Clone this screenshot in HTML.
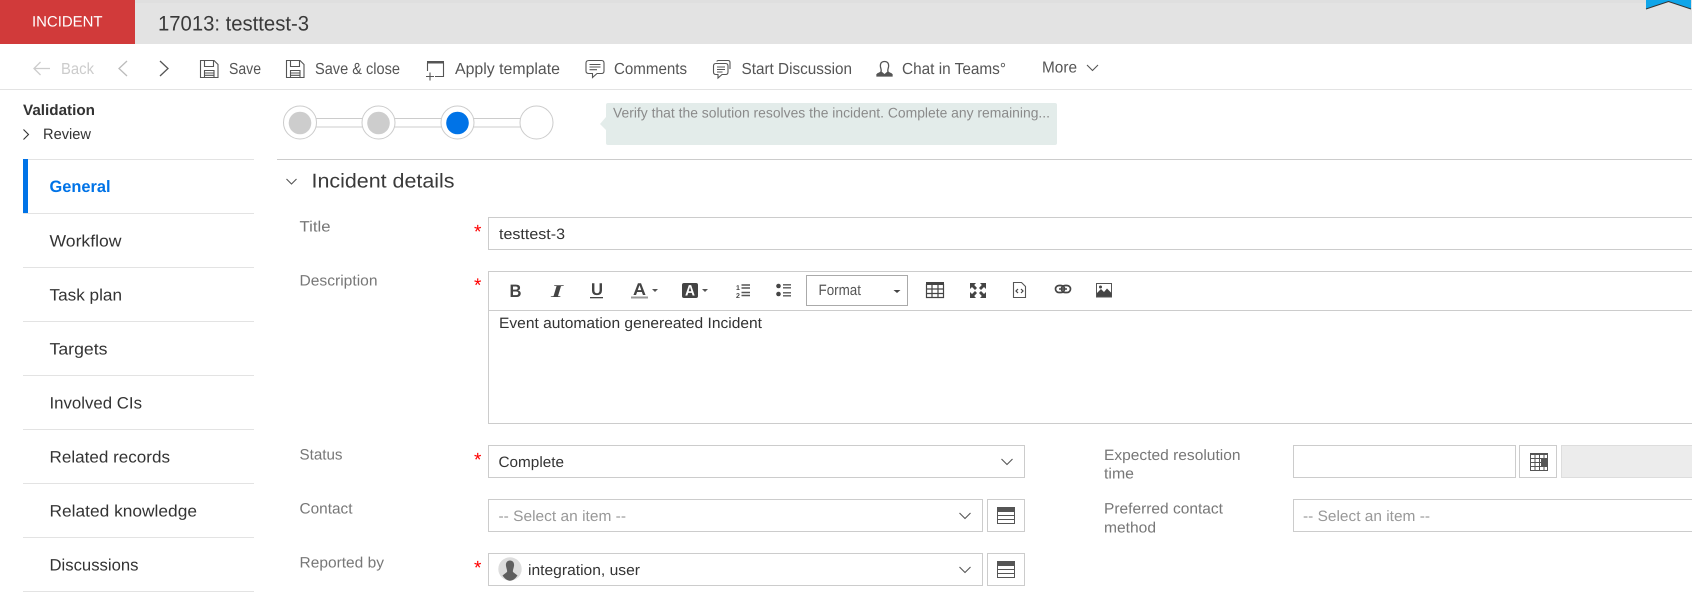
<!DOCTYPE html>
<html><head><meta charset="utf-8"><title>Incident 17013</title>
<style>
html,body{margin:0;padding:0;background:#fff;width:1692px;height:611px;overflow:hidden}
svg{display:block;font-family:"Liberation Sans",sans-serif}
.t{font-size:16px;fill:#555}
.s{font-size:16.5px;fill:#333}
.l{font-size:15px;fill:#777}
.v{font-size:15px;fill:#333}
.p{font-size:15px;fill:#999}
.a{font-size:19px;fill:#f00}
.b{fill:#fff;stroke:#ccc;stroke-width:1}
.ln{stroke:#e3e3e3;stroke-width:1}
.i{fill:none;stroke:#555;stroke-width:1.1}
.f{fill:#555}
</style></head><body>
<svg width="1692" height="611" viewBox="0 0 1692 611" xmlns="http://www.w3.org/2000/svg" text-rendering="geometricPrecision">
<rect width="1692" height="611" fill="#fff"/>
<!-- header -->
<rect width="1692" height="44" fill="#e3e3e3"/>
<rect width="1692" height="3" fill="#dfdfdf"/>
<rect width="135" height="44" fill="#d13a3a"/>
<text x="32" y="26.5" font-size="15" fill="#fff" textLength="70.5" lengthAdjust="spacingAndGlyphs">INCIDENT</text>
<text x="158" y="30.5" font-size="21" fill="#3a3a3a" textLength="151" lengthAdjust="spacingAndGlyphs">17013: testtest-3</text>
<path d="M1646 0H1691V9L1668.500 1.500L1646 9Z" fill="#0fa5e9"/>
<path d="M1646 9L1668.500 1.500L1691 9" fill="none" stroke="#333" stroke-width="1"/>
<!-- toolbar -->
<line x1="0" y1="89.500" x2="1692" y2="89.500" stroke="#e3e3e3"/>
<path d="M50 68.500H34M40.500 62L34 68.500L40.500 75" fill="none" stroke="#ccc" stroke-width="1.300"/>
<text x="61" y="74" class="t" style="fill:#ccc" textLength="33" lengthAdjust="spacingAndGlyphs">Back</text>
<path d="M127 61L119 68.500L127 76" fill="none" stroke="#bbb" stroke-width="1.300"/>
<path d="M160 61L168 68.500L160 76" fill="none" stroke="#555" stroke-width="1.300"/>
<g>
<path d="M200.500 60.500H214L218 64.500V77.500H200.500Z" class="i"/>
<path d="M204.500 60.500V66.500H213.500V60.500" class="i"/>
<path d="M204.500 77.500V70.500H214V77.500M204.500 73H214M204.500 75.300H214" class="i" stroke-width="1"/>
</g>
<text x="229" y="74" class="t" textLength="32" lengthAdjust="spacingAndGlyphs">Save</text>
<g transform="translate(86 0)">
<path d="M200.500 60.500H214L218 64.500V77.500H200.500Z" class="i"/>
<path d="M204.500 60.500V66.500H213.500V60.500" class="i"/>
<path d="M204.500 77.500V70.500H214V77.500M204.500 73H214M204.500 75.300H214" class="i"/>
</g>
<text x="315" y="74" class="t" textLength="85" lengthAdjust="spacingAndGlyphs">Save &amp; close</text>
<path d="M427 61H444V63.500H427Z" class="f"/>
<path d="M427.500 63V71M443.500 63V76.500H435" class="i"/>
<path d="M426 76.500H434M430 72.500V80.500" class="i"/>
<text x="455" y="74" class="t" textLength="105" lengthAdjust="spacingAndGlyphs">Apply template</text>
<path d="M589 60.500H601.500Q604 60.500 604 63V71Q604 73.500 601.500 73.500H597L592.500 77.500V73.500H589Q586 73.500 586 71V63Q586 60.500 589 60.500Z" class="i"/>
<path d="M589.500 64.500H600.500M589.500 67H600.500M589.500 69.700H597" class="i" stroke-width="1"/>
<text x="614" y="74" class="t" textLength="73" lengthAdjust="spacingAndGlyphs">Comments</text>
<path d="M716 63.500H725.500Q728 63.500 728 66V72Q728 74.500 725.500 74.500H722L718 78V74.500H716Q713.500 74.500 713.500 72V66Q713.500 63.500 716 63.500Z" class="i"/>
<path d="M717 67H725M717 69.500H725M717 72H722.500" class="i" stroke-width="1"/>
<path d="M717 61.500Q717 60.500 718.500 60.500H728Q730 60.500 730 62.500V69" class="i"/>
<text x="741.500" y="74" class="t" textLength="110.500" lengthAdjust="spacingAndGlyphs">Start Discussion</text>
<path d="M884.500 61.500C881 61.500 880 64 880.500 67C881 69.500 882 71 880.500 72.500L877 74.500V76H892V74.500L888.500 72.500C887 71 888 69.500 888.500 67C889 64 888 61.500 884.500 61.500Z" fill="#fff" stroke="#555" stroke-width="1.300"/>
<path d="M877 76.500V73.500L881.500 71.500L884.500 74L887.500 71.500L892 73.500V76.500Z" fill="#555"/>
<text x="902" y="74" class="t" textLength="104" lengthAdjust="spacingAndGlyphs">Chat in Teams°</text>
<text x="1042" y="72.500" class="t" textLength="35" lengthAdjust="spacingAndGlyphs">More</text>
<path d="M1087 65L1092.500 70.500L1098 65" fill="none" stroke="#555" stroke-width="1.100"/>
<!-- validation -->
<text x="23" y="115" font-size="15" font-weight="bold" fill="#333" textLength="72" lengthAdjust="spacingAndGlyphs">Validation</text>
<path d="M23.500 129.500L28.500 134.500L23.500 139.500" fill="none" stroke="#333" stroke-width="1.100"/>
<text x="43" y="139" class="v" textLength="48" lengthAdjust="spacingAndGlyphs">Review</text>
<!-- stepper -->
<rect x="310" y="118.500" width="220" height="8.500" fill="#fff" stroke="#ccc"/>
<g fill="#fff" stroke="#ccc" stroke-width="1">
<ellipse cx="300" cy="122.500" rx="16.500" ry="16.500"/>
<ellipse cx="378.500" cy="122.500" rx="16.500" ry="16.500"/>
<ellipse cx="457.500" cy="122.500" rx="16.500" ry="16.500"/>
<ellipse cx="536.500" cy="122.500" rx="16.500" ry="16.500"/>
</g>
<circle cx="300" cy="123" r="11.300" fill="#cdcdcd"/>
<circle cx="378.500" cy="123" r="11.300" fill="#cdcdcd"/>
<circle cx="457.500" cy="123" r="11.300" fill="#0073e7"/>
<!-- tooltip -->
<path d="M606 117L600 124L606 130Z" fill="#e3ecea"/>
<rect x="606" y="103" width="451" height="42" rx="2" fill="#e3ecea"/>
<text x="613" y="117.500" font-size="14" fill="#8a8a8a" textLength="437" lengthAdjust="spacingAndGlyphs">Verify that the solution resolves the incident. Complete any remaining...</text>
<!-- sidebar -->
<g class="ln">
<line x1="23" y1="159.500" x2="254" y2="159.500"/>
<line x1="23" y1="213.500" x2="254" y2="213.500"/>
<line x1="23" y1="267.500" x2="254" y2="267.500"/>
<line x1="23" y1="321.500" x2="254" y2="321.500"/>
<line x1="23" y1="375.500" x2="254" y2="375.500"/>
<line x1="23" y1="429.500" x2="254" y2="429.500"/>
<line x1="23" y1="483.500" x2="254" y2="483.500"/>
<line x1="23" y1="537.500" x2="254" y2="537.500"/>
<line x1="23" y1="591.500" x2="254" y2="591.500"/>
</g>
<rect x="23" y="159" width="5" height="54" fill="#0073e7"/>
<text x="49.500" y="192" font-size="16.500" font-weight="bold" fill="#0073e7" textLength="61" lengthAdjust="spacingAndGlyphs">General</text>
<text x="49.500" y="246.500" class="s" textLength="72" lengthAdjust="spacingAndGlyphs">Workflow</text>
<text x="49.500" y="300.500" class="s" textLength="72.500" lengthAdjust="spacingAndGlyphs">Task plan</text>
<text x="49.500" y="354.500" class="s" textLength="58" lengthAdjust="spacingAndGlyphs">Targets</text>
<text x="49.500" y="408.500" class="s" textLength="92.500" lengthAdjust="spacingAndGlyphs">Involved CIs</text>
<text x="49.500" y="462.500" class="s" textLength="120.500" lengthAdjust="spacingAndGlyphs">Related records</text>
<text x="49.500" y="516.500" class="s" textLength="147.500" lengthAdjust="spacingAndGlyphs">Related knowledge</text>
<text x="49.500" y="570.500" class="s" textLength="89" lengthAdjust="spacingAndGlyphs">Discussions</text>
<!-- section -->
<line x1="277" y1="159.500" x2="1692" y2="159.500" stroke="#ccc"/>
<path d="M286.500 179L291.500 184L296.500 179" fill="none" stroke="#555" stroke-width="1.100"/>
<text x="311.500" y="187.500" font-size="20" fill="#3a3a3a" textLength="143" lengthAdjust="spacingAndGlyphs">Incident details</text>
<!-- labels -->
<text x="299.500" y="231.500" class="l" textLength="31" lengthAdjust="spacingAndGlyphs">Title</text>
<text x="299.500" y="285.500" class="l" textLength="78" lengthAdjust="spacingAndGlyphs">Description</text>
<text x="299.500" y="459.500" class="l" textLength="43" lengthAdjust="spacingAndGlyphs">Status</text>
<text x="299.500" y="513.500" class="l" textLength="53" lengthAdjust="spacingAndGlyphs">Contact</text>
<text x="299.500" y="567.500" class="l" textLength="84.500" lengthAdjust="spacingAndGlyphs">Reported by</text>
<text x="1104" y="460" class="l" textLength="136.500" lengthAdjust="spacingAndGlyphs">Expected resolution</text>
<text x="1104" y="478.500" class="l" textLength="30" lengthAdjust="spacingAndGlyphs">time</text>
<text x="1104" y="513.500" class="l" textLength="119" lengthAdjust="spacingAndGlyphs">Preferred contact</text>
<text x="1104" y="532.500" class="l" textLength="52" lengthAdjust="spacingAndGlyphs">method</text>
<text x="474" y="238" class="a">*</text>
<text x="474" y="291.500" class="a">*</text>
<text x="474" y="466" class="a">*</text>
<text x="474" y="574" class="a">*</text>
<!-- title -->
<rect x="488.500" y="217.500" width="1300" height="32" class="b"/>
<text x="499" y="239" class="v" textLength="66" lengthAdjust="spacingAndGlyphs">testtest-3</text>
<!-- editor -->
<rect x="488.500" y="271.500" width="1300" height="152" class="b"/>
<line x1="488" y1="310.500" x2="1692" y2="310.500" stroke="#ccc"/>
<text x="509.500" y="297" font-size="18" font-weight="bold" fill="#444" textLength="12" lengthAdjust="spacingAndGlyphs">B</text>
<text x="551" y="297" font-size="18" font-weight="bold" font-style="italic" fill="#444" font-family="Liberation Serif" textLength="12" lengthAdjust="spacingAndGlyphs">I</text>
<text x="591" y="295" font-size="17" font-weight="bold" fill="#444" textLength="12" lengthAdjust="spacingAndGlyphs">U</text>
<rect x="590" y="297" width="13" height="1.300" fill="#444"/>
<text x="633" y="295" font-size="17" font-weight="bold" fill="#444" textLength="13" lengthAdjust="spacingAndGlyphs">A</text>
<rect x="631" y="296.500" width="17" height="2" fill="#999"/>
<path d="M652 289H658L655 292Z" class="f"/>
<rect x="682" y="283" width="16" height="15" rx="2" fill="#444"/>
<text x="685" y="295.500" font-size="15" font-weight="bold" fill="#fff" textLength="10" lengthAdjust="spacingAndGlyphs">A</text>
<path d="M702 289H708L705 292Z" class="f"/>
<text x="736" y="290" font-size="7" font-weight="bold" fill="#444">1</text>
<text x="736" y="298" font-size="7" font-weight="bold" fill="#444">2</text>
<path d="M741.500 285H750M741.500 288H750M741.500 292.500H750M741.500 295.500H750" stroke="#555" stroke-width="1.400" fill="none"/>
<circle cx="778.500" cy="286" r="2.300" fill="#444"/>
<circle cx="778.500" cy="294" r="2.300" fill="#444"/>
<path d="M783 284.800H791M783 287.800H791M783 292.800H791M783 295.800H791" stroke="#555" stroke-width="1.400" fill="none"/>
<rect x="806.500" y="275.500" width="101" height="30" fill="#fff" stroke="#aaa"/>
<text x="818.500" y="295" font-size="15" fill="#555" textLength="42.500" lengthAdjust="spacingAndGlyphs">Format</text>
<path d="M893.500 290H900.500L897 293Z" fill="#444"/>
<rect x="926" y="282" width="18" height="3" fill="#444"/>
<path d="M926.500 284V297.500H943.500V284M926.500 289H943.500M926.500 293.500H943.500M932 285V297.500M938 285V297.500" fill="none" stroke="#444" stroke-width="1.200"/>
<path d="M970 283H976L974.200 285L977 288L975 290L972 287L970 289ZM986 283H980L981.800 285L979 288L981 290L984 287L986 289ZM970 298H976L974.200 296L977 293L975 291L972 294L970 292ZM986 298H980L981.800 296L979 293L981 291L984 294L986 292Z" fill="#444"/>
<path d="M1013.500 282.500H1021.500L1025.500 286.500V297.500H1013.500Z" fill="none" stroke="#555" stroke-width="1.100"/>
<path d="M1018 289L1016 291L1018 293M1021 289L1023 291L1021 293" fill="none" stroke="#444" stroke-width="1.200"/>
<rect x="1055.500" y="285.500" width="9" height="7" rx="3.500" fill="none" stroke="#444" stroke-width="1.700"/>
<rect x="1061.500" y="285.500" width="9" height="7" rx="3.500" fill="none" stroke="#444" stroke-width="1.700"/>
<path d="M1059 289H1067" stroke="#444" stroke-width="1.500"/>
<rect x="1096.500" y="283.500" width="15" height="13.500" fill="#fff" stroke="#555"/>
<path d="M1097 296.500V293L1101 289L1104 292L1107 288.500L1111.500 293V296.500Z" fill="#444"/>
<circle cx="1100.500" cy="287" r="1.500" fill="#444"/>
<text x="499" y="328" class="v" textLength="263" lengthAdjust="spacingAndGlyphs">Event automation genereated Incident</text>
<!-- status -->
<rect x="488.500" y="445.500" width="536" height="32" class="b"/>
<text x="498.500" y="467" class="v" textLength="65.500" lengthAdjust="spacingAndGlyphs">Complete</text>
<path d="M1001.500 459L1007 464.500L1012.500 459" fill="none" stroke="#555" stroke-width="1.100"/>
<!-- contact -->
<rect x="488.500" y="499.500" width="494" height="32" class="b"/>
<text x="498.500" y="521" class="p" textLength="127.500" lengthAdjust="spacingAndGlyphs">-- Select an item --</text>
<path d="M959.500 513L965 518.500L970.500 513" fill="none" stroke="#555" stroke-width="1.100"/>
<rect x="987.500" y="499.500" width="37" height="32" class="b"/>
<rect x="997" y="507" width="18" height="5" fill="#555"/>
<path d="M997.500 511V523.500H1014.500V511M997.500 515.500H1014.500M997.500 519.500H1014.500" fill="none" stroke="#555" stroke-width="1"/>
<!-- reported -->
<rect x="488.500" y="553.500" width="494" height="32" class="b"/>
<ellipse cx="510" cy="569" rx="11.700" ry="11.700" fill="#ddd"/>
<path d="M510 560.500C507 560.500 505.500 563 506 566C506.500 569 507.500 570.500 507 572L502.500 575.500Q506 580.700 510 580.700Q514 580.700 517.500 575.500L513 572C512.500 570.500 513.500 569 514 566C514.500 563 513 560.500 510 560.500Z" fill="#5f5f5f"/>
<text x="528" y="575" class="v" textLength="112" lengthAdjust="spacingAndGlyphs">integration, user</text>
<path d="M959.500 567L965 572.500L970.500 567" fill="none" stroke="#555" stroke-width="1.100"/>
<rect x="987.500" y="553.500" width="37" height="32" class="b"/>
<rect x="997" y="561" width="18" height="5" fill="#555"/>
<path d="M997.500 565V577.500H1014.500V565M997.500 569.500H1014.500M997.500 573.500H1014.500" fill="none" stroke="#555" stroke-width="1"/>
<!-- right -->
<rect x="1293.500" y="445.500" width="222" height="32" class="b"/>
<rect x="1519.500" y="445.500" width="37" height="32" class="b"/>
<path d="M1530.500 453V470.500H1547.500V453M1530.500 458.500H1547.500M1530.500 462.500H1547.500M1530.500 466.500H1547.500M1535 453V470.500M1539.500 453V470.500M1544 453V470.500" fill="none" stroke="#555" stroke-width="1"/>
<rect x="1530" y="453" width="18" height="2" fill="#555"/>
<rect x="1541" y="459" width="6.500" height="7" fill="#555"/>
<rect x="1561.500" y="445.500" width="200" height="32" fill="#ececec" stroke="#ddd"/>
<rect x="1293.500" y="499.500" width="500" height="32" class="b"/>
<text x="1303" y="521" class="p" textLength="127" lengthAdjust="spacingAndGlyphs">-- Select an item --</text>
</svg>
</body></html>
